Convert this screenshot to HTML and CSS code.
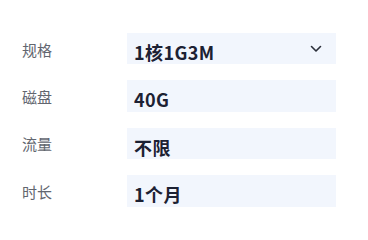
FILE: index.html
```html
<!DOCTYPE html>
<html lang="zh-CN">
<head>
<meta charset="utf-8">
<link rel="stylesheet" href="styles.css">
</head>
<body>
<div class="form">
  <div class="row">
    <div class="label">规格</div>
    <div class="field select">
      <span class="value">1核1G3M</span>
      <svg class="chev" width="12" height="8" viewBox="0 0 12 8"><path d="M1.5 1.5 L6 6 L10.5 1.5" fill="none" stroke="#2b2f3a" stroke-width="1.6" stroke-linecap="round" stroke-linejoin="round"/></svg>
    </div>
  </div>
  <div class="row">
    <div class="label">磁盘</div>
    <div class="field"><span class="value">40G</span></div>
  </div>
  <div class="row">
    <div class="label">流量</div>
    <div class="field"><span class="value">不限</span></div>
  </div>
  <div class="row">
    <div class="label">时长</div>
    <div class="field"><span class="value">1个月</span></div>
  </div>
</div>
</body>
</html>
```

FILE: styles.css
```css
html, body {
  margin: 0;
  padding: 0;
  background: #ffffff;
}
body {
  width: 368px;
  height: 207px;
  overflow: hidden;
  font-family: "Noto Sans CJK SC", "Noto Sans", sans-serif;
}
.form {
  padding: 33px 0 0 22px;
  display: flex;
  flex-direction: column;
  gap: 16px;
}
.row {
  display: grid;
  grid-template-columns: 105px 209px;
  align-items: center;
  height: 31.4px;
}
.label {
  font-size: 15px;
  line-height: 20px;
  color: #62666f;
  padding-top: 2px;
}
.field {
  box-sizing: border-box;
  height: 31.4px;
  background: #f2f6fd;
  padding: 7px 14px 0 7px;
  display: flex;
  align-items: flex-start;
  justify-content: space-between;
}
.value {
  font-size: 18px;
  line-height: 24px;
  font-weight: 700;
  color: #1c2133;
  letter-spacing: 0.4px;
}
.chev {
  margin-top: 5px;
}
```
